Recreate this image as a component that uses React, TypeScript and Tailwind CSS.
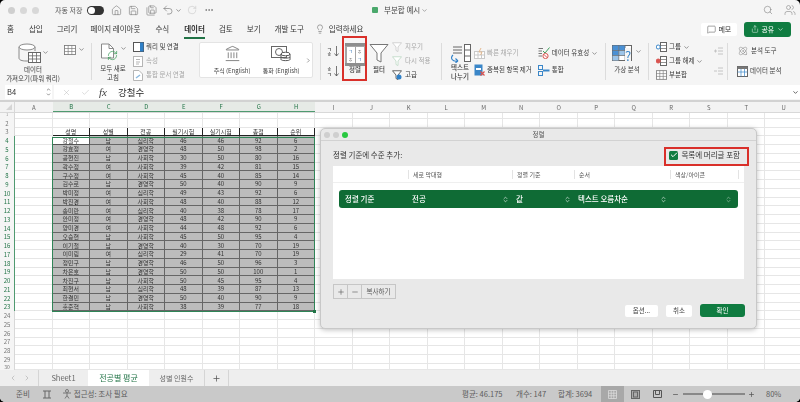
import { ChevronDown, ChevronRight, ChevronLeft, ChevronsUpDown, Check, X, Home, Save, SaveAll, Undo2, RotateCw, MoreHorizontal, Lightbulb, Search, MessageSquare, Share, Landmark, RefreshCw, Plus, Minus, Users, Atom } from "lucide-react"

const font = "font-['Noto_Sans_CJK_KR','Noto_Sans',sans-serif]"

const columns = ["A", "B", "C", "D", "E", "F", "G", "H", "I", "J", "K", "L", "M", "N", "O", "P", "Q", "R", "S", "T", "U"]

const header = ["성명", "성별", "전공", "필기시험", "실기시험", "총점", "순위"]
const people = [
    ["강철수", "남", "심리학", "46", "46", "92", "6"],
    ["강효정", "여", "경영학", "48", "50", "98", "2"],
    ["공현진", "남", "사회학", "30", "50", "80", "16"],
    ["곽수정", "여", "사회학", "39", "42", "81", "15"],
    ["구수정", "여", "사회학", "45", "40", "85", "14"],
    ["김수로", "남", "경영학", "50", "40", "90", "9"],
    ["박미정", "여", "심리학", "49", "43", "92", "6"],
    ["박진경", "여", "사회학", "48", "40", "88", "12"],
    ["송미란", "여", "심리학", "40", "38", "78", "17"],
    ["안미정", "여", "경영학", "48", "42", "90", "9"],
    ["양미경", "여", "사회학", "44", "48", "92", "6"],
    ["오승현", "남", "사회학", "45", "50", "95", "4"],
    ["이기철", "남", "경영학", "40", "30", "70", "19"],
    ["이미림", "여", "심리학", "29", "41", "70", "19"],
    ["정민구", "남", "경영학", "46", "50", "96", "3"],
    ["차은호", "남", "경영학", "50", "50", "100", "1"],
    ["차진구", "남", "사회학", "50", "45", "95", "4"],
    ["최현서", "남", "심리학", "48", "39", "87", "13"],
    ["한결민", "남", "경영학", "50", "40", "90", "9"],
    ["홍준혁", "남", "사회학", "38", "39", "77", "18"],
]

const tabs = [
    { label: "홈", cls: "ml-[7px]" },
    { label: "삽입", cls: "ml-[15px]" },
    { label: "그리기", cls: "ml-[14px]" },
    { label: "페이지 레이아웃", cls: "ml-[13px]" },
    { label: "수식", cls: "ml-[15px]" },
    { label: "데이터", cls: "ml-[15px] font-semibold" },
    { label: "검토", cls: "ml-[14px]" },
    { label: "보기", cls: "ml-[14px]" },
    { label: "개발 도구", cls: "ml-[14px]" },
]

function GridIcon({ w = 14, h = 12 }: { w?: number; h?: number }) {
    return (
        <svg width={w} height={h} viewBox="0 0 14 12" fill="none">
            <rect x="0.5" y="0.5" width="13" height="11" fill="#fff" stroke="#777" />
            <path d="M0.5 4.2H13.5M0.5 7.8H13.5M4.8 0.5V11.5M9.2 0.5V11.5" stroke="#777" strokeWidth="0.8" />
        </svg>
    )
}

function DataIcon() {
    return (
        <svg width="24" height="20" viewBox="0 0 24 20" fill="none">
            <path d="M1 4V15C1 17 4 18 8 18H11M17 4V8" stroke="#8a8a8a" />
            <ellipse cx="9" cy="4" rx="8" ry="3" fill="#fff" stroke="#8a8a8a" />
            <rect x="10.5" y="9.5" width="12" height="10" fill="#fff" stroke="#666" />
            <path d="M10.5 12.8H22.5M10.5 16H22.5M14.5 9.5V19.5M18.5 9.5V19.5" stroke="#666" strokeWidth="0.8" />
        </svg>
    )
}

function DocIcon() {
    return (
        <svg width="20" height="20" viewBox="0 0 20 20" fill="none">
            <path d="M1.5 1H9L13.5 5.5V15H1.5Z" fill="#fff" stroke="#8a8a8a" />
            <path d="M9 1V5.5H13.5" stroke="#8a8a8a" />
        </svg>
    )
}

function SortAzIcon({ flip }: { flip?: boolean }) {
    return (
        <span className="flex h-[12px] w-[12px] items-center justify-between">
            <span className="flex flex-col text-[5px] font-semibold leading-[5.5px] text-[#555]">
                <span>{flip ? "ㅎ" : "ㄱ"}</span>
                <span>{flip ? "ㄱ" : "ㅎ"}</span>
            </span>
            <svg width="5" height="11" viewBox="0 0 5 11" fill="none">
                <path d="M2.5 0V10M0.5 7.5L2.5 10L4.5 7.5" stroke="#555" strokeWidth="0.8" />
            </svg>
        </span>
    )
}

function SortIcon() {
    return (
        <span className="flex h-[23px] w-[20px] items-center justify-center gap-[1px] border-y-[3px] border-[#8e8e8e] bg-[#a5a5a5] px-[1px]">
            <span className="flex h-[16px] w-[8px] flex-col items-center justify-around bg-white text-[5px] leading-[6px] text-[#3778b8]">
                <span>ㄱ</span>
                <span className="text-[#555]">ㅎ</span>
            </span>
            <span className="flex h-[16px] w-[8px] flex-col items-center justify-around bg-white text-[5px] leading-[6px] text-[#555]">
                <span>ㅎ</span>
                <span className="text-[#3778b8]">ㄱ</span>
            </span>
        </span>
    )
}

function FunnelIcon({ size = 20, color = "#777", badge }: { size?: number; color?: string; badge?: string }) {
    return (
        <svg width={size} height={size} viewBox="0 0 20 20" fill="none">
            <path d="M1 1.5H19L12 10V19L8 17V10Z" fill="#fff" stroke={color} strokeWidth={size < 12 ? 1.6 : 1} />
            {badge && <circle cx="14" cy="14" r="5" fill={badge} />}
        </svg>
    )
}

function SplitIcon() {
    return (
        <svg width="21" height="19" viewBox="0 0 21 19" fill="none">
            <path d="M3 3H12M3 6H12M3 9H12" stroke="#666" />
            <rect x="14.5" y="0.5" width="6" height="17" fill="#fff" stroke="#666" />
            <path d="M14.5 6H20.5M14.5 12H20.5" stroke="#666" />
            <path d="M3 11C0 14 2 18 8 17M8 17L5.5 14.5M8 17L5.5 18.8" stroke="#2f80c8" strokeWidth="1.1" />
        </svg>
    )
}

function WhatIfIcon() {
    return (
        <span className="relative flex">
            <svg width="20" height="16" viewBox="0 0 20 16" fill="none">
                <rect x="0.5" y="0.5" width="19" height="15" fill="#fff" stroke="#666" />
                <rect x="0.5" y="0.5" width="6.3" height="5" fill="#4a90d4" />
                <rect x="0.5" y="5.5" width="6.3" height="5" fill="#4a90d4" />
                <rect x="6.8" y="0.5" width="6.3" height="5" fill="#4a90d4" />
                <rect x="0.5" y="10.5" width="6.3" height="5" fill="#9cc4e8" />
                <rect x="6.8" y="5.5" width="6.3" height="5" fill="#9cc4e8" />
                <path d="M0.5 5.5H19.5M0.5 10.5H19.5M6.8 0.5V15.5M13.1 0.5V15.5" stroke="#666" strokeWidth="0.7" />
            </svg>
            <span className="absolute left-[13px] top-[3px] bg-[#f5f5f5] text-[13px] leading-[16px] text-[#3b87c9]">?</span>
        </span>
    )
}

function SmallIcon({ kind }: { kind: string }) {
    if (kind === "query") {
        return (
            <svg width="11" height="10" viewBox="0 0 11 10" fill="none">
                <rect x="0.5" y="0.5" width="10" height="9" fill="#fff" stroke="#555" />
                <rect x="7" y="0.5" width="3.5" height="9" fill="#2f80c8" />
            </svg>
        )
    }
    if (kind === "prop") {
        return (
            <svg width="10" height="11" viewBox="0 0 10 11" fill="none">
                <rect x="0.5" y="0.5" width="9" height="10" fill="#fff" stroke="#b5b5b5" />
                <path d="M3 3.5H7M3 6H7M3 8H6" stroke="#b5b5b5" />
            </svg>
        )
    }
    if (kind === "link") {
        return (
            <svg width="10" height="11" viewBox="0 0 10 11" fill="none">
                <path d="M0.5 0.5H6L9.5 4V10.5H0.5Z" fill="#fff" stroke="#b5b5b5" />
                <path d="M3 8L7 5" stroke="#8ab8de" strokeWidth="1.4" />
            </svg>
        )
    }
    if (kind === "flash") {
        return (
            <svg width="11" height="11" viewBox="0 0 11 11" fill="none">
                <rect x="0.5" y="3.5" width="10" height="7" fill="#fff" stroke="#c9c9c9" />
                <path d="M0.5 7H10.5M4 3.5V10.5M7.5 3.5V10.5" stroke="#c9c9c9" />
                <path d="M7 0L5 4H8L6.5 7" stroke="#e5b98e" />
            </svg>
        )
    }
    if (kind === "dedupe") {
        return (
            <svg width="11" height="12" viewBox="0 0 11 12" fill="none">
                <rect x="0.5" y="0.5" width="8" height="11" fill="#3a86c8" />
                <rect x="2" y="4" width="5" height="2" fill="#fff" />
                <path d="M6.5 7.5L10.5 11.5M10.5 7.5L6.5 11.5" stroke="#d9534f" strokeWidth="1.2" />
            </svg>
        )
    }
    if (kind === "valid") {
        return (
            <svg width="12" height="12" viewBox="0 0 12 12" fill="none">
                <path d="M0.5 1.5H5M0.5 4H4M0.5 6.5H4M0.5 9H4" stroke="#555" strokeWidth="0.8" />
                <path d="M5 4L7 6L11.5 0.5" stroke="#3f9e5c" />
                <circle cx="7.5" cy="9" r="2.6" fill="#fff" stroke="#d9534f" />
                <path d="M5.8 7.3L9.2 10.7" stroke="#d9534f" />
            </svg>
        )
    }
    if (kind === "merge") {
        return (
            <svg width="12" height="11" viewBox="0 0 12 11" fill="none">
                <rect x="0.5" y="0.5" width="4" height="4" stroke="#3a86c8" />
                <rect x="0.5" y="6.5" width="4" height="4" stroke="#3a86c8" />
                <path d="M5 5.5H11.5" stroke="#3a86c8" strokeWidth="2" />
            </svg>
        )
    }
    if (kind === "group" || kind === "ungroup") {
        return (
            <svg width="11" height="10" viewBox="0 0 11 10" fill="none">
                <rect x="4.5" y="0.5" width="6" height="9" fill="#fff" stroke="#666" />
                <path d="M4.5 3.5H10.5M4.5 6.5H10.5" stroke="#666" strokeWidth="0.7" />
                <circle cx="2.2" cy="5" r="2" fill={kind === "group" ? "#fff" : "#d9534f"} stroke={kind === "group" ? "#3a86c8" : "#d9534f"} />
            </svg>
        )
    }
    if (kind === "subtotal") return <GridIcon w={11} h={10} />
    return (
        <svg width="11" height="11" viewBox="0 0 11 11" fill="none">
            <rect x="0.5" y="0.5" width="10" height="10" fill="#fff" stroke="#666" />
            <rect x="0.5" y="0.5" width="10" height="2.5" fill="#777" />
            <path d="M4 3V10.5M7.5 3V10.5M0.5 6H10.5" stroke="#3a86c8" strokeWidth="0.7" />
        </svg>
    )
}

function RibbonLine({ icon, label, dim, chevron, cls = "" }: { icon: React.ReactNode; label: string; dim?: boolean; chevron?: boolean; cls?: string }) {
    return (
        <div className={`flex h-[14px] items-center ${cls}`}>
            <span className="flex w-[14px] shrink-0 items-center justify-center">{icon}</span>
            <span className={`ml-[1px] whitespace-nowrap text-[6.5px] ${dim ? "text-[#a8a8a8]" : "text-[#3a3a3a]"}`}>{label}</span>
            {chevron && <ChevronDown size={7} className="ml-[2px] text-[#555]" />}
        </div>
    )
}

function Sep() {
    return <div className="h-[37px] w-px shrink-0 self-center bg-[#dcdcdc]" />
}

function TitleBar() {
    return (
        <div className="flex h-[20px] items-center text-[#555]">
            <div className="ml-[8px] flex gap-[5px]">
                <span className="h-[7px] w-[7px] rounded-full bg-[#cfcfcf]" />
                <span className="h-[7px] w-[7px] rounded-full bg-[#d8d8d8]" />
                <span className="h-[7px] w-[7px] rounded-full bg-[#d8d8d8]" />
            </div>
            <span className="ml-[16px] w-[32px] whitespace-nowrap text-[7px]">자동 저장</span>
            <span className="flex h-[9px] w-[17px] items-center rounded-full bg-[#333] pl-[1px]">
                <span className="h-[7px] w-[7px] rounded-full bg-white" />
            </span>
            <Home size={11} strokeWidth={1.3} className="ml-[7px] text-[#777]" />
            <Save size={11} strokeWidth={1.3} className="ml-[6px] text-[#777]" />
            <SaveAll size={11} strokeWidth={1.3} className="ml-[7px] text-[#777]" />
            <Undo2 size={12} strokeWidth={1.3} className="ml-[5px] text-[#777]" />
            <ChevronDown size={7} className="ml-[1px] text-[#555]" />
            <RotateCw size={10} strokeWidth={1.3} className="ml-[5px] text-[#c4c4c4]" />
            <MoreHorizontal size={10} className="ml-[7px] text-[#777]" />
            <span className="ml-[158px] h-[6px] w-[6px] rounded-[1px] bg-[#4aa86c]" />
            <span className="ml-[6px] whitespace-nowrap text-[7.5px] text-[#444]">부분합 예시</span>
            <ChevronDown size={7} className="ml-[1px] text-[#777]" />
            <Search size={10} strokeWidth={1.3} className="ml-[335px] text-[#777]" />
            <Users size={12} strokeWidth={1.2} className="ml-[11px] text-[#888]" />
        </div>
    )
}

function TabsRow() {
    return (
        <div className="flex h-[18px] items-center text-[#333]">
            {tabs.map((t) => (
                <span key={t.label} className={`relative whitespace-nowrap text-[7.5px] ${t.cls}`}>
                    {t.label}
                    {t.label === "데이터" && <span className="absolute -bottom-[4px] left-0 right-0 h-[2px] bg-[#217346]" />}
                </span>
            ))}
            <Lightbulb size={10} strokeWidth={1.2} className="ml-[11px] text-[#555]" />
            <span className="ml-[4px] whitespace-nowrap text-[7.5px]">입력하세요</span>
            <button className="ml-[338px] flex h-[13px] w-[36px] items-center justify-center gap-[2px] rounded-[2px] bg-white text-[7px] text-[#333]">
                <MessageSquare size={9} strokeWidth={1.2} />
                메모
            </button>
            <button className="ml-[7px] flex h-[15px] w-[47px] items-center justify-center gap-[2px] rounded-[3px] bg-[#107c41] text-[7px] text-white">
                <Share size={8} strokeWidth={1.4} />
                공유
                <ChevronDown size={7} className="ml-[1px]" />
            </button>
        </div>
    )
}

function Ribbon() {
    return (
        <div className="flex h-[46px] text-[#3a3a3a]">
            <div className="flex w-[91px] shrink-0">
                <div className="ml-[2px] flex w-[62px] flex-col items-center pt-[5px]">
                    <div className="flex h-[20px] items-start">
                        <DataIcon />
                        <ChevronDown size={7} className="mt-[6px] text-[#555]" />
                    </div>
                    <div className="mt-[2px] whitespace-nowrap text-center text-[6.5px] leading-[9px]">
                        데이터
                        <br />
                        가져오기(파워 쿼리)
                    </div>
                </div>
                <div className="flex h-[16px] items-center pt-[7px]">
                    <GridIcon w={12} h={10} />
                    <ChevronDown size={7} className="ml-[2px] text-[#555]" />
                </div>
            </div>
            <Sep />
            <div className="flex w-[107px] shrink-0">
                <div className="ml-[3px] flex w-[36px] flex-col items-center pt-[5px]">
                    <div className="relative flex h-[20px] items-start">
                        <DocIcon />
                        <RefreshCw size={11} strokeWidth={1.6} className="absolute left-[7px] top-[7px] text-[#3f9e5c]" />
                        <ChevronDown size={7} className="mt-[2px] text-[#555]" />
                    </div>
                    <div className="mt-[1px] whitespace-nowrap text-center text-[6.5px] leading-[9px]">
                        모두 새로
                        <br />
                        고침
                    </div>
                </div>
                <div className="flex flex-col pt-[2px]">
                    <RibbonLine icon={<SmallIcon kind="query" />} label="쿼리 및 연결" />
                    <RibbonLine icon={<SmallIcon kind="prop" />} label="속성" dim />
                    <RibbonLine icon={<SmallIcon kind="link" />} label="통합 문서 연결" dim />
                </div>
            </div>
            <div className="my-[4px] flex h-[36px] w-[114px] shrink-0 items-center rounded-[2px] border border-[#e4e4e4] bg-white">
                <div className="ml-[10px] flex w-[46px] flex-col items-center">
                    <Landmark size={17} strokeWidth={1} className="text-[#555]" />
                    <span className="mt-[4px] whitespace-nowrap text-[6px] text-[#444]">주식 (English)</span>
                </div>
                <div className="ml-[5px] flex w-[46px] flex-col items-center">
                    <svg width="20" height="17" viewBox="0 0 20 17" fill="none">
                        <rect x="0.5" y="1.5" width="15" height="11" stroke="#666" />
                        <circle cx="8" cy="7" r="3.5" stroke="#666" />
                        <ellipse cx="14.5" cy="9" rx="4.5" ry="1.8" fill="#fff" stroke="#555" />
                        <path d="M10 9V14.5C10 16 19 16 19 14.5V9M10 12C10 13.5 19 13.5 19 12" stroke="#555" fill="none" />
                    </svg>
                    <span className="mt-[4px] whitespace-nowrap text-[6px] text-[#444]">통화 (English)</span>
                </div>
                <ChevronRight size={7} className="ml-[2px] text-[#555]" />
            </div>
            <div className="w-[7px] shrink-0" />
            <Sep />
            <div className="flex w-[120px] shrink-0">
                <div className="ml-[6px] flex flex-col pt-[7px]">
                    <SortAzIcon />
                    <div className="h-[8px]" />
                    <SortAzIcon flip />
                </div>
                <div className="ml-[6px] flex w-[20px] flex-col items-center pt-[5px]">
                    <SortIcon />
                    <span className="mt-[-1px] text-[6.5px] font-medium">정렬</span>
                </div>
                <div className="ml-[4px] flex w-[20px] flex-col items-center pt-[5px]">
                    <FunnelIcon />
                    <span className="mt-[2px] text-[6.5px] font-medium">필터</span>
                </div>
                <div className="ml-[1px] flex flex-col pt-[2px]">
                    <RibbonLine icon={<FunnelIcon size={10} color="#c9c9c9" />} label="지우기" dim />
                    <RibbonLine icon={<FunnelIcon size={10} color="#bcd8c4" />} label="다시 적용" dim />
                    <RibbonLine icon={<FunnelIcon size={10} color="#444" badge="#2f80c8" />} label="고급" />
                </div>
            </div>
            <Sep />
            <div className="flex w-[163px] shrink-0">
                <div className="ml-[6px] flex w-[24px] flex-col items-center pt-[6px]">
                    <SplitIcon />
                    <div className="mt-[0px] whitespace-nowrap text-center text-[6.5px] font-medium leading-[8.5px]">
                        텍스트
                        <br />
                        나누기
                    </div>
                </div>
                <div className="flex flex-col pt-[8px]">
                    <RibbonLine icon={<SmallIcon kind="flash" />} label="빠른 채우기" dim />
                    <div className="h-[3px]" />
                    <RibbonLine icon={<SmallIcon kind="dedupe" />} label="중복된 항목 제거" />
                </div>
                <div className="ml-[5px] flex flex-col pt-[8px]">
                    <RibbonLine icon={<SmallIcon kind="valid" />} label="데이터 유효성" chevron />
                    <div className="h-[3px]" />
                    <RibbonLine icon={<SmallIcon kind="merge" />} label="통합" />
                </div>
            </div>
            <Sep />
            <div className="flex w-[42px] shrink-0 flex-col items-center pt-[7px]">
                <div className="flex h-[19px] items-start">
                    <WhatIfIcon />
                    <span className="w-[3px]" />
                    <ChevronDown size={7} className="mt-[3px] text-[#555]" />
                </div>
                <span className="mt-[1px] whitespace-nowrap text-[6.5px]">가상 분석</span>
            </div>
            <Sep />
            <div className="flex w-[78px] shrink-0">
                <div className="ml-[5px] flex w-[54px] flex-col pt-[2px]">
                    <RibbonLine icon={<SmallIcon kind="group" />} label="그룹" chevron />
                    <RibbonLine icon={<SmallIcon kind="ungroup" />} label="그룹 해제" chevron />
                    <RibbonLine icon={<SmallIcon kind="subtotal" />} label="부분합" />
                </div>
                <div className="ml-[6px] flex flex-col gap-[12px] pt-[9px] text-[#c4c4c4]">
                    <svg width="9" height="8" viewBox="0 0 9 8" fill="none"><path d="M0 4H3M1.5 2.5V5.5M4 1H9M4 4H9M4 7H9" stroke="currentColor" /></svg>
                    <svg width="9" height="8" viewBox="0 0 9 8" fill="none"><path d="M0 4H3M4 1H9M4 4H9M4 7H9" stroke="currentColor" /></svg>
                </div>
            </div>
            <Sep />
            <div className="ml-[7px] flex flex-col gap-[6px] pt-[6px]">
                <RibbonLine icon={<Atom size={10} strokeWidth={1} className="text-[#666]" />} label="분석 도구" cls="ml-[1px]" />
                <RibbonLine icon={<SmallIcon kind="report" />} label="데이터 분석" />
            </div>
        </div>
    )
}

function FormulaBar() {
    return (
        <div className="flex h-[18px] items-stretch border-b-2 border-[#d2d2d2] py-[1px]">
            <div className="ml-[5px] flex w-[47px] items-center justify-between bg-white pl-[2px] pr-[1px] text-[7.5px] text-[#333]">
                B4
                <span className="flex flex-col text-[#555]">
                    <ChevronDown size={5} className="rotate-180" strokeWidth={3} />
                    <ChevronDown size={5} strokeWidth={3} />
                </span>
            </div>
            <div className="ml-[2px] flex flex-1 items-center bg-white">
                <X size={9} strokeWidth={1.2} className="ml-[8px] text-[#b5b5b5]" />
                <Check size={9} strokeWidth={1.2} className="ml-[10px] text-[#b5b5b5]" />
                <span className="ml-[9px] w-[8px] font-['Liberation_Serif',serif] text-[11px] italic text-[#444]">fx</span>
                <span className="ml-[11px] text-[9.5px] text-[#222]">강철수</span>
                <ChevronDown size={7} strokeWidth={3} className="ml-auto mr-[1px] text-[#555]" />
            </div>
        </div>
    )
}

function Cell({ text, row, col }: { text?: string; row: number; col: number }) {
    const inTable = col >= 1 && col <= 7 && row >= 3 && row <= 23
    let cls = "border-b border-r border-[#e6e6e6] text-[#333]"
    if (inTable) {
        if (row === 3) cls = "border-b border-r border-[#222] bg-white text-[#333]"
        else if (row === 4 && col === 1) cls = "border-b border-r border-[#555] bg-white text-[#333]"
        else cls = "border-b border-r border-[#666] bg-[#bcbcbc] text-[#333]"
    }
    return (
        <div className={`flex h-full w-[37.5px] shrink-0 items-center justify-center overflow-hidden whitespace-nowrap pt-[1px] text-[6px] leading-none ${cls}`}>
            {text}
        </div>
    )
}

function rowHeight(r: number) {
    if (r === 1) return "h-[5.75px]"
    if (r === 30) return "h-[6.25px]"
    return "h-[8.75px]"
}

function Sheet() {
    const rows = Array.from({ length: 30 }, (_, i) => i + 1)
    return (
        <div className="relative h-[268px] overflow-hidden bg-white">
            <div className="flex h-[11px] border-b border-[#d8d8d8] bg-[#f3f3f3]">
                <div className="flex w-[15px] shrink-0 items-end justify-end border-r border-[#d8d8d8] p-[2px]">
                    <svg width="6" height="6" viewBox="0 0 6 6"><path d="M6 0V6H0Z" fill="#d5d5d5" /></svg>
                </div>
                {columns.map((c, i) => (
                    <div
                        key={c}
                        className={`flex w-[37.5px] shrink-0 items-center justify-center text-[6px] ${i >= 1 && i <= 7 ? "border-b-[1.5px] border-[#4f9a70] bg-[#e6eae6] text-[#217346]" : "text-[#666]"}`}
                    >
                        {c}
                    </div>
                ))}
            </div>
            {rows.map((r) => (
                <div key={r} className={`flex ${rowHeight(r)}`}>
                    <div className={`flex w-[15px] shrink-0 items-center justify-center overflow-hidden border-r bg-[#f5f5f5] leading-none ${r === 1 ? "text-[3px]" : r === 30 ? "text-[5px]" : "pt-[1px] text-[6px]"} ${r >= 4 && r <= 23 ? "border-[#4f9a70] text-[#217346]" : "border-[#d8d8d8] text-[#777]"}`}>
                        {r}
                    </div>
                    {columns.map((c, i) => {
                        let text: string | undefined
                        if (i >= 1 && i <= 7 && r === 3) text = header[i - 1]
                        if (i >= 1 && i <= 7 && r >= 4 && r <= 23) text = people[r - 4][i - 1]
                        return <Cell key={c} text={text} row={r} col={i} />
                    })}
                </div>
            ))}
            <div className="pointer-events-none absolute left-[52px] top-[34.5px] h-[175.5px] w-[262.5px] border border-[#2f8557]">
                <span className="absolute -bottom-[2px] -right-[2px] h-[3px] w-[3px] bg-[#217346]" />
            </div>
        </div>
    )
}

function SheetTabs() {
    return (
        <div className="flex h-[16px] items-stretch bg-[#eeeeee] text-[7.5px] text-[#666]">
            <div className="flex w-[38px] items-center gap-[6px] pl-[9px] text-[#b0b0b0]">
                <ChevronLeft size={8} strokeWidth={2} />
                <ChevronRight size={8} strokeWidth={2} />
            </div>
            <div className="flex w-[50px] items-center justify-center border-l border-[#d5d5d5]">Sheet1</div>
            <div className="flex w-[61px] items-center justify-center bg-white text-[8px] text-[#217346]">전공별 평균</div>
            <div className="flex w-[56px] items-center justify-center border-r border-[#d5d5d5] text-[7px]">성별 인원수</div>
            <div className="flex w-[24px] items-center justify-center border-r border-[#d5d5d5] text-[#555]">
                <Plus size={9} strokeWidth={2} />
            </div>
        </div>
    )
}

function StatusBar() {
    return (
        <div className="flex h-[16px] items-center bg-[#c9c9c9] text-[7.5px] text-[#5c5c5c]">
            <div className="flex w-[462px] shrink-0 items-center">
                <span className="ml-[16px]">준비</span>
                <svg width="10" height="9" viewBox="0 0 10 9" fill="none" className="ml-[12px]">
                    <path d="M1 1H9M1 8H9M3 1V8M7 1V8" stroke="#666" />
                </svg>
                <svg width="10" height="10" viewBox="0 0 10 10" fill="none" className="ml-[10px]">
                    <circle cx="5" cy="2" r="1.5" stroke="#777" />
                    <path d="M1 4H9M5 4V6.5M3 9.5L5 6.5L7 9.5" stroke="#777" />
                </svg>
                <span className="ml-[2px] whitespace-nowrap">접근성: 조사 필요</span>
            </div>
            <span className="w-[54px] shrink-0 whitespace-nowrap">평균: 46.175</span>
            <span className="w-[42px] shrink-0 whitespace-nowrap">개수: 147</span>
            <span className="w-[43px] shrink-0 whitespace-nowrap">합계: 3694</span>
            <span className="flex h-full w-[23px] shrink-0 items-center justify-center bg-[#a8a8a8]">
                <svg width="9" height="9" viewBox="0 0 9 9" fill="none">
                    <path d="M0.5 0.5H8.5V8.5H0.5ZM0.5 3.2H8.5M0.5 5.8H8.5M3.2 0.5V8.5M5.8 0.5V8.5" stroke="#e3e3e3" strokeWidth="0.7" />
                </svg>
            </span>
            <svg width="9" height="9" viewBox="0 0 9 9" fill="none" className="ml-[7px]">
                <rect x="0.5" y="0.5" width="8" height="8" fill="#aaa" stroke="#666" />
                <rect x="2.5" y="2" width="4" height="5" stroke="#666" />
            </svg>
            <svg width="9" height="9" viewBox="0 0 9 9" fill="none" className="ml-[13px]">
                <path d="M0.5 0.5H8.5V7.5H0.5ZM2.5 0.5V4.5H6.5V0.5" stroke="#555" />
            </svg>
            <Minus size={7} strokeWidth={2.5} className="ml-[10px] text-[#555]" />
            <div className="ml-[4px] flex w-[62px] items-center">
                <span className="h-[2px] w-[20px] bg-[#888]" />
                <span className="h-[9px] w-[9px] rounded-full bg-white" />
                <span className="h-[2px] flex-1 bg-[#888]" />
            </div>
            <Plus size={7} strokeWidth={2.5} className="ml-[3px] text-[#555]" />
            <span className="ml-[11px]">80%</span>
        </div>
    )
}

function SortDialog() {
    return (
        <div className="absolute left-[320px] top-[128px] flex h-[201px] w-[437px] flex-col rounded-[5px] border border-[#c8c8c8] bg-[#e9e9e9] shadow-[0_1px_5px_rgba(0,0,0,0.25)]">
            <div className="relative flex h-[12px] shrink-0 items-center border-b border-[#d2d2d2] pl-[2px]">
                <span className="ml-[1px] h-[6px] w-[6px] rounded-full bg-[#cfcfcf]" />
                <span className="ml-[3px] h-[6px] w-[6px] rounded-full bg-[#cfcfcf]" />
                <span className="ml-[3px] h-[6px] w-[6px] rounded-full bg-[#28c840]" />
                <span className="absolute inset-x-0 text-center text-[6.5px] text-[#555]">정렬</span>
            </div>
            <div className="flex h-[25px] shrink-0 items-center justify-between px-[12px] pt-[3px] text-[7.5px] text-[#333]">
                <span>정렬 기준에 수준 추가:</span>
                <label className="mr-[4px] flex items-center gap-[3px] whitespace-nowrap">
                    <span className="flex h-[9px] w-[9px] items-center justify-center rounded-[1.5px] bg-[#107c41] text-white">
                        <Check size={8} strokeWidth={3} />
                    </span>
                    목록에 머리글 포함
                </label>
            </div>
            <div className="mx-[12px] flex h-[113px] shrink-0 flex-col bg-white">
                <div className="grid h-[17px] grid-cols-[75px_104px_62px_96px_69px_7px] items-center border-b border-[#efefef] text-[6px] text-[#555]">
                    <span />
                    <span className="border-l border-[#e3e3e3] pl-[4px]">세로 막대형</span>
                    <span className="border-l border-[#e3e3e3] pl-[4px]">정렬 기준</span>
                    <span className="border-l border-[#e3e3e3] pl-[4px]">순서</span>
                    <span className="border-x border-[#e3e3e3] pl-[4px]">색상/아이콘</span>
                    <span />
                </div>
                <div className="mx-[6px] mt-[7px] grid h-[18px] grid-cols-[69px_104px_62px_96px_69px] items-center rounded-[3px] bg-[#0f6b35] text-[7.5px] font-medium text-white">
                    <span className="pl-[6px]">정렬 기준</span>
                    <span className="flex items-center justify-between pl-[4px] pr-[3px]">
                        전공
                        <ChevronsUpDown size={7} />
                    </span>
                    <span className="flex items-center justify-between pl-[4px] pr-[3px]">
                        값
                        <ChevronsUpDown size={7} />
                    </span>
                    <span className="flex items-center justify-between pl-[4px] pr-[3px]">
                        텍스트 오름차순
                        <ChevronsUpDown size={7} />
                    </span>
                    <span className="flex justify-end pr-[7px] text-[#a9c9b5]">
                        <ChevronsUpDown size={7} />
                    </span>
                </div>
            </div>
            <div className="mx-[12px] mt-[5px] flex h-[15px] w-[63px] shrink-0 items-stretch border border-[#c6c6c6] text-[#555]">
                <span className="flex w-[14px] items-center justify-center border-r border-[#c6c6c6]">
                    <Plus size={8} strokeWidth={1.8} />
                </span>
                <span className="flex w-[14px] items-center justify-center border-r border-[#c6c6c6]">
                    <Minus size={8} strokeWidth={1.8} />
                </span>
                <span className="flex flex-1 items-center justify-center whitespace-nowrap text-[6.5px]">복사하기</span>
            </div>
            <div className="mt-[5px] flex items-center justify-end pr-[11px] text-[6.5px]">
                <button className="flex h-[12px] w-[33px] items-center justify-center rounded-[2px] bg-white text-[#444]">옵션...</button>
                <button className="ml-[8px] flex h-[12px] w-[26px] items-center justify-center rounded-[2px] bg-white text-[#444]">취소</button>
                <button className="ml-[8px] flex h-[13px] w-[45px] items-center justify-center rounded-[3px] bg-[#107c41] text-white">확인</button>
            </div>
        </div>
    )
}

export default function App() {
    return (
        <div className={`h-[402px] w-[800px] overflow-hidden bg-black ${font}`}>
            <div className="relative flex h-full w-full flex-col overflow-hidden rounded-[5px] bg-[#f5f5f5] blur-[0.35px]">
                <TitleBar />
                <TabsRow />
                <Ribbon />
                <FormulaBar />
                <Sheet />
                <SheetTabs />
                <StatusBar />
                <SortDialog />
                <div className="pointer-events-none absolute left-[342px] top-[36px] h-[45px] w-[25px] border-2 border-[#d9302a]" />
                <div className="pointer-events-none absolute left-[664px] top-[147px] h-[19px] w-[85px] border-2 border-[#d9302a]" />
            </div>
        </div>
    )
}
